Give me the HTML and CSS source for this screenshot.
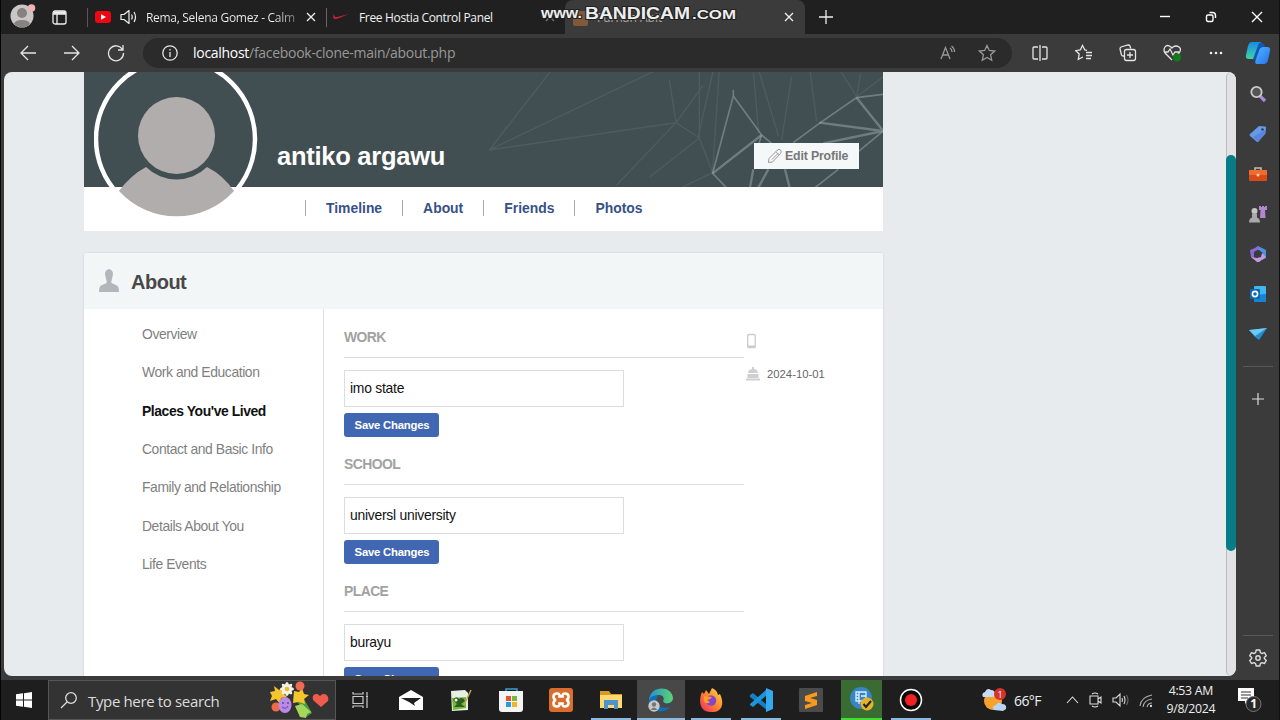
FILE: index.html
```html
<!DOCTYPE html>
<html lang="en">
  <head>
    <meta charset="UTF-8" />
    <meta name="viewport" content="width=device-width, initial-scale=1.0" />
    <title>Furhan Abit</title>
    <link rel="stylesheet" href="styles.css">
  </head>
  <body>
    <div class="screen">
      <!-- tab strip -->
      <div class="tabs">
        <div class="strip-left">
          <svg class="user-pic" width="26" height="26" viewBox="0 0 26 26">
            <circle cx="12" cy="13" r="11.5" fill="#c9c7c6" />
            <circle cx="12" cy="10" r="5" fill="#858280" />
            <path d="M4 21q1-4 8-4t8 4a11.5 11.5 0 0 1-16 0" fill="#858280" />
            <circle cx="21.5" cy="5" r="3.8" fill="#f2b3b3" />
          </svg>
          <svg width="15" height="15" viewBox="0 0 15 15" fill="none" stroke="#eee" stroke-width="1.3">
            <rect x="1" y="1" width="13" height="13" rx="2" />
            <path d="M1 4h13M5 4v10" /><path d="M1.500 2.600h12" stroke-width="2.500" />
          </svg>
        </div>
        <div class="tab first">
          <svg width="16" height="12" viewBox="0 0 16 12"><rect width="16" height="12" rx="3" fill="#f00612" /><path d="M6 3.200l5 2.800-5 2.800z" fill="#fff" /></svg>
          <svg class="sound" width="17" height="16" viewBox="0 0 17 16" fill="none" stroke="#eee" stroke-width="1.200">
            <path d="M1 5.500h3L9 1.500v13L4 10.500H1z" stroke-linejoin="round" /><path d="M11.500 5.500q1.500 2.500 0 5M14 3q3 5 0 10" />
          </svg>
          <span class="tab-title calm">Rema, Selena Gomez - Calm</span>
          <svg class="close" width="10" height="10" viewBox="0 0 10 10"><path d="M1 1l8 8M9 1l-8 8" /></svg>
        </div>
        <div class="tab second">
          <svg width="18" height="8" viewBox="0 0 18 8"><path d="M2 1C0 5 2 7 6 5.500L17 1 6 3.700C3 4.400 2 3.500 2 1z" fill="#c8203b" /></svg>
          <span class="tab-title hostia">Free Hostia Control Panel</span>
          <svg class="close dim" width="10" height="10" viewBox="0 0 10 10"><path d="M1 1l8 8M9 1l-8 8" /></svg>
        </div>
        <div class="tab active">
          <span class="favicon"></span>
          <span class="tab-title under">Furhan Abit</span>
          <svg class="close" width="10" height="10" viewBox="0 0 10 10"><path d="M1 1l8 8M9 1l-8 8" /></svg>
        </div>
        <svg class="new-tab" width="14" height="14" viewBox="0 0 14 14"><path d="M7 0v14M0 7h14" /></svg>
        <div class="window-buttons">
          <svg width="12" height="12" viewBox="0 0 12 12"><path d="M1 5.500h10" /></svg>
          <svg width="12" height="12" viewBox="0 0 12 12"><rect x="1.500" y="4" width="6.500" height="6.500" rx="1.500" /><path d="M4.500 1.500h3q3 0 3 3v2.500" /></svg>
          <svg width="12" height="12" viewBox="0 0 12 12"><path d="M1 1l10 10M11 1L1 11" /></svg>
        </div>
      </div>

      <!-- recorder watermark -->
      <svg class="watermark" width="204" height="24" viewBox="0 0 204 24">
        <text x="4" y="16" font-size="15" textLength="41" lengthAdjust="spacingAndGlyphs">www.</text>
        <text x="48" y="17" font-size="16" textLength="105" lengthAdjust="spacingAndGlyphs">BANDICAM</text>
        <text x="155" y="17" font-size="12.500" textLength="44" lengthAdjust="spacingAndGlyphs">.COM</text>
      </svg>

      <!-- address bar -->
      <div class="toolbar">
        <div class="nav-buttons">
          <svg width="18" height="18" viewBox="0 0 18 18"><path d="M17 9H2M9 2L2 9l7 7" /></svg>
          <svg width="18" height="18" viewBox="0 0 18 18"><path d="M1 9h15M9 2l7 7-7 7" /></svg>
          <svg width="18" height="18" viewBox="0 0 18 18"><path d="M15.500 5.500A7.500 7.500 0 1 0 16.500 9M16 1v5h-5" /></svg>
        </div>
        <div class="address">
          <svg width="16" height="16" viewBox="0 0 16 16"><circle cx="8" cy="8" r="7.200" /><path d="M8 7v5M8 4v1.500" /></svg>
          <span class="url"><b>localhost</b>/facebook-clone-main/about.php</span>
          <svg class="read" width="16" height="16" viewBox="0 0 16 16"><path d="M1 14L5.500 2.500 10 14M2.800 10h5.500M10 3q2 1.500 2 4M11.500 1q3 2 3 6" /></svg>
          <svg class="star" width="18" height="18" viewBox="0 0 18 18"><path d="M9 1.500l2.300 5 5.300.6-4 3.700 1.100 5.400L9 13.500l-4.700 2.700 1.100-5.400-4-3.700 5.300-.6z" /></svg>
        </div>
        <div class="tools">
          <svg width="18" height="18" viewBox="0 0 18 18"><path d="M7 3H3q-1 0-1 1v10q0 1 1 1h4M11 3h4q1 0 1 1v10q0 1-1 1h-4M9 1v16" /></svg>
          <svg width="18" height="18" viewBox="0 0 18 18"><path d="M12 6.300l-2.200-.3L7.500 1.500l-2.200 4.500-4.600.7 3.500 3.400-.9 5.300L8 13M11 8.500h6M11 11.500h6M11 14.500h5" /></svg>
          <svg width="18" height="18" viewBox="0 0 18 18"><path d="M5 12H4q-1 0-1.500-1L1 5q0-1.500 1-2l7-2q1.500 0 2 1l.7 2.500" /><rect x="5.500" y="5.500" width="11" height="11" rx="2" /><path d="M11 8v6M8 11h6" /></svg>
          <svg width="18" height="18" viewBox="0 0 18 18"><path d="M9 16L2 9Q0 6 2 3t6 0l1 1 1-1q3-2 6 0t0 6l-2 2M1 8h4l2-3 3 6 2-3h4" /><circle cx="14" cy="13.500" r="4" class="green" /></svg>
          <svg width="18" height="18" viewBox="0 0 18 18" class="dots"><circle cx="4" cy="9" r="1.300" /><circle cx="9" cy="9" r="1.300" /><circle cx="14" cy="9" r="1.300" /></svg>
        </div>
        <svg class="copilot" width="26" height="24" viewBox="0 0 26 24">
          <defs>
            <linearGradient id="cp1" x2="0" y2="1"><stop stop-color="#168ce9" /><stop offset="1" stop-color="#42d3a1" /></linearGradient>
            <linearGradient id="cp2" x2="1" y2="1"><stop stop-color="#52b5ff" /><stop offset="1" stop-color="#2471ed" /></linearGradient>
          </defs>
          <path d="M7 1h8q2 0 1 3l-3 11q-1 3-4 3H4q-4 0-3-4L3 5q1-4 4-4z" fill="url(#cp1)" />
          <path d="M11 18l3-9q1-3 4-3h4q4 0 3 4l-2 9q-1 4-4 4h-7q-3 0-1-5z" fill="url(#cp2)" />
          <path d="M14 2h3q2 0 3 4h-2q-3 0-4 4l-3 8q-1 3-3 0z" fill="#1456b5" />
        </svg>
      </div>

      <div class="content">
        <div class="page">
          <div class="profile">
            <div class="cover">
              <svg class="web" width="799" height="115" viewBox="0 0 799 115">
                <g transform="translate(396 -2) scale(.3333)" fill="none" stroke="#a5b7b9">
                  <g stroke-width="4" opacity=".13">
                    <path d="M28 240L210 6M28 240L530 0M28 240l560-82-20-130M588 158l80-110M588 158l70 46V0M588 158L410 345M658 204L510 320M658 204l40 104L610 350M700 0l-45 200M718 0l-20 300M820 0l16 190M836 0l60 200M935 20l-30 190M990 0l20 155M1080 0l50 80 12-70M1130 80L1210 20" />
                  </g>
                  <path d="M760 60v18l-62 232 40 42M760 78l85 117 30 25M940 218l78-58 112-77 80-10M1210 183l-75 62M1075 298l-70 55M845 195l-8 25" stroke-width="5" opacity=".45" />
                  <path d="M698 310L845 195M1018 158l192 25-80-100M1030 220l180-37M820 298l-10 55M865 298l-30 55M915 298l14 55" stroke-width="7" opacity=".45" />
                </g>
              </svg>
              <h1>antiko argawu</h1>
              <a class="edit-profile">
                <svg width="16" height="16" viewBox="0 0 16 16"><path d="M1.500 14.500l.5-4L10.500 2q1.500-1.500 3 0t0 3.500L5.500 14zM9 3.800l3 3M11 5.500L5 11.500" /></svg>
                <span>Edit Profile</span>
              </a>
            </div>
            <div class="profile-nav">
              <a>Timeline</a>
              <a>About</a>
              <a>Friends</a>
              <a>Photos</a>
            </div>
            <svg class="avatar" width="164" height="164" viewBox="0 0 164 164">
              <circle cx="81.500" cy="83" r="79.500" fill="none" stroke="#fff" stroke-width="4.500" />
              <path d="M25 135Q37 119 52 111A43.500 43.500 0 0 0 113 111Q129 119 140 135A78 78 0 0 1 25 135z" fill="#b1adac" />
              <circle cx="82.500" cy="79.500" r="38.500" fill="#b1adac" />
            </svg>
          </div>

          <div class="about">
            <div class="about-head">
              <svg width="22" height="24" viewBox="0 0 22 24"><path d="M7 5q0-4 4-5 4 1 4 5l-1 5q-1 2-.5 4l5.500 2.500q2 1 2 6.500H1q0-5.500 2-6.500L8.500 14q.5-2-.5-4z" fill="#b4b7b9" /></svg>
              <h2>About</h2>
            </div>
            <div class="about-body">
              <ul class="menu">
                <li>Overview</li>
                <li>Work and Education</li>
                <li class="selected">Places You've Lived</li>
                <li>Contact and Basic Info</li>
                <li>Family and Relationship</li>
                <li>Details About You</li>
                <li>Life Events</li>
              </ul>
              <div class="fields">
                <div class="field">
                  <h3>WORK</h3>
                  <input type="text" value="imo state">
                  <button>Save Changes</button>
                </div>
                <div class="field">
                  <h3>SCHOOL</h3>
                  <input type="text" value="universl university">
                  <button>Save Changes</button>
                </div>
                <div class="field">
                  <h3>PLACE</h3>
                  <input type="text" value="burayu">
                  <button>Save Changes</button>
                </div>
              </div>
              <div class="info">
                <svg width="15" height="16" viewBox="0 0 15 16"><rect x="1.700" y="1.500" width="7.500" height="13" rx="1" fill="none" stroke="#ccc" stroke-width="1.300" /><path d="M1.500 12.500h8v2h-8z" fill="#ccc" /></svg>
                <div class="birthday">
                  <svg width="15" height="16" viewBox="0 0 15 16" fill="#cfcfcf"><path d="M6 1h2v3H6zM3 4q4-2 8 0l1 3H2zM1.500 8h11v4h-11zM0 12.500h14v2H0z" /></svg>
                  <span>2024-10-01</span>
                </div>
              </div>
            </div>
          </div>
          <div class="scrollbar"><div class="thumb"></div></div>
        </div>

        <div class="sidebar">
          <div class="side-icon"><svg width="18" height="18" viewBox="0 0 18 18"><path d="M11 11l5 5" stroke="#a78bd8" stroke-width="3.200" /><circle cx="7.500" cy="7" r="5.200" fill="#555" stroke="#ccc" stroke-width="1.800" /></svg></div>
          <div class="side-icon"><svg width="18" height="18" viewBox="0 0 18 18"><path d="M10 1l6 .5q1 0 1 1l-.5 6-7 8q-1 1-2 0L1 11q-1-1 0-2z" fill="#669ae8" /><path d="M4 12l5 5 7-9V5z" fill="#5b84de" /><circle cx="13.500" cy="4.500" r="1.300" fill="#24406e" /></svg></div>
          <div class="side-icon"><svg width="18" height="18" viewBox="0 0 18 18"><path d="M6 5V3h6v2" fill="none" stroke="#cfb6ac" stroke-width="1.600" /><rect x="0" y="5" width="18" height="11" rx="1" fill="#d94a19" /><path d="M0 5h18v5H0z" fill="#f16a30" /><circle cx="9" cy="10" r="1.500" fill="#f5d2b8" /></svg></div>
          <div class="side-icon"><svg width="18" height="18" viewBox="0 0 18 18"><path d="M10 1h2v1h1V1h2v1h1V1h2v4h-2l.5 8H11l.5-8H10z" fill="#b287d2" /><circle cx="5.500" cy="6" r="3" fill="#c5c3c5" /><path d="M3 8.500h5v4q3 1 3 5H0q0-4 3-5z" fill="#aaa8aa" /></svg></div>
          <div class="side-icon"><svg width="18" height="18" viewBox="0 0 18 18"><path d="M9 1l8 4v8l-4 2 .5-7.500L6 3.500z" fill="#4e91dc" /><path d="M6 3l3-2 1 3-5 3v7l-3-2-1-7z" fill="#8b69d4" /><path d="M2 12l6 1 5-5 4 4-7 5H8z" fill="#c199e5" /><path d="M6 7l4-2 3 3-1 4-4 1-2-2z" fill="#3b3b3b" /></svg></div>
          <div class="side-icon"><svg width="18" height="18" viewBox="0 0 18 18"><rect x="5" y="1" width="12" height="13" rx="1" fill="#42b6ef" /><path d="M5 10l12-1v8H5z" fill="#1685d4" /><rect x="1" y="4" width="10" height="10" rx="1" fill="#0b68b5" /><circle cx="6" cy="9" r="2.600" fill="none" stroke="#fff" stroke-width="1.600" /></svg></div>
          <div class="side-icon"><svg width="18" height="18" viewBox="0 0 18 18"><path d="M0 5l18-2-8 12-4-3z" fill="#248dd5" /><path d="M0 5l18-2-12 8z" fill="#71c9f2" /></svg></div>
          <div class="side-add"><svg width="12" height="12" viewBox="0 0 12 12"><path d="M6 0v12M0 6h12" stroke="#ddd" stroke-width="1.200" /></svg></div>
          <div class="side-settings"><svg width="20" height="20" viewBox="0 0 20 20" fill="none" stroke="#ddd" stroke-width="1.400" stroke-linejoin="round"><path d="M8.200 2h3.600l.6 2.600 1.500.9 2.600-.8 1.800 3.100-2 1.800v1l2 1.800-1.800 3.100-2.600-.8-1.500.9-.6 2.400H8.200l-.6-2.400-1.500-.9-2.600.8-1.800-3.100 2-1.800v-1l-2-1.800 1.800-3.100 2.600.8 1.500-.9z" /><circle cx="10" cy="10" r="2.200" /></svg></div>
        </div>
      </div>

      <!-- taskbar -->
      <div class="taskbar">
        <div class="start"><svg width="16" height="16" viewBox="0 0 16 16" fill="#fff"><path d="M0 2.300l7-1v6.300H0zM8 1.200L16 0v7.600H8zM0 8.500h7v6.200l-7-1zM8 8.500h8V16l-8-1.200z" /></svg></div>
        <div class="search">
          <svg width="18" height="18" viewBox="0 0 18 18" fill="none" stroke="#ddd" stroke-width="1.300"><circle cx="11" cy="7" r="5.300" /><path d="M7 11l-6 6" /></svg>
          <span>Type here to search</span>
          <svg class="flowers" width="62" height="38" viewBox="0 0 62 38">
            <path d="M28 18l10 18 6-4-8-14z" fill="#4c9c3c" /><path d="M27 25l7-2 9 8-4 2-1 4-6-1z" fill="#a6d65c" />
            <g fill="#f6c42d"><path d="M2 11l5-1-1-5 5 4 4-3v6l4 4-6 1-1 6-4-5-6 2 2-5z" /><path d="M26 10l5 1 3-4 2 6 5 1-5 4 1 5-6-2-6 1z" /></g>
            <circle cx="32" cy="5" r="4.500" fill="#ef6b55" /><circle cx="8" cy="26" r="4.500" fill="#ef6b45" />
            <g fill="#f4f1ea"><ellipse cx="19" cy="8" rx="2.500" ry="7" /><ellipse cx="19" cy="8" rx="7" ry="2.500" /><ellipse cx="19" cy="8" rx="2.500" ry="7" transform="rotate(45 19 8)" /><ellipse cx="19" cy="8" rx="2.500" ry="7" transform="rotate(-45 19 8)" /></g><circle cx="19" cy="8" r="2.300" fill="#f1b822" />
            <ellipse cx="17" cy="24" rx="6.500" ry="8" fill="#b98be7" /><circle cx="15" cy="22" r="1" fill="#664398" /><circle cx="20" cy="22" r="1" fill="#664398" /><path d="M14 26q4 3 6-1" fill="none" stroke="#664398" />
            <path d="M53 26l-7-6c-4-5 2-10 6-5 4-5 10 0 8 5z" fill="#f05c4b" />
          </svg>
        </div>
        <div class="task view"><svg width="18" height="18" viewBox="0 0 18 18" fill="none" stroke="#ccc" stroke-width="1.200"><path d="M2 1v2h10V1M2 17v-2h10v2M2 5.500h10v7H2zM16 1v3M16 7v10" /><path d="M15 5.500h2" stroke-width="2" /></svg></div>
        <div class="apps">
          <div class="task"><svg width="26" height="22" viewBox="0 0 26 22"><path d="M1 8l12-7 12 7v13H1z" fill="#fff" /><path d="M3 9h20l-7 5 1 3-6-4z" fill="#1f1f1f" /></svg></div>
          <div class="task"><svg width="24" height="24" viewBox="0 0 24 24"><path d="M2 3l14-1 3 3v17L3 23z" fill="#e8eee5" /><path d="M3 10l14-1v11L4 22z" fill="#70bd32" /><path d="M4 12q3-5 6-1 4-3 6 2l-4 3 4 3H5l3-3z" fill="#315c27" /><circle cx="7" cy="12" r="1.500" fill="#fff" /><path d="M22 2l-7 15" stroke="#c5a65a" stroke-width="1.500" /></svg></div>
          <div class="task"><svg width="24" height="24" viewBox="0 0 24 24"><path d="M7 5V1h11v4" fill="none" stroke="#3aa0d4" stroke-width="1.500" /><path d="M0 3h24v18q0 3-3 3H3q-3 0-3-3z" fill="#f4f4f4" /><path d="M7 8h5v5H7z" fill="#e75232" /><path d="M13 8h5v5h-5z" fill="#79b83a" /><path d="M7 14h5v5H7z" fill="#279edb" /><path d="M13 14h5v5h-5z" fill="#f3b51b" /></svg></div>
          <div class="task"><svg width="24" height="24" viewBox="0 0 24 24"><rect width="24" height="24" rx="3" fill="#d96d2d" /><path d="M8 5.500Q4.500 5.500 4.500 8.500T7 12q-2.500.5-2.500 3.500t3.500 3q3 0 2.500-3h3q-.5 3 2.500 3t3.500-3T17 12q2.500-.5 2.500-3.500t-3.500-3q-3 0-2.500 3h-3q.5-3-2.500-3z" fill="none" stroke="#fff" stroke-width="2.600" /></svg></div>
          <div class="task open"><svg width="22" height="20" viewBox="0 0 22 20"><path d="M0 1h9l2 3h11v14H0z" fill="#d89b25" /><path d="M0 5h22v13H0z" fill="#ffda71" /><path d="M4 10h14v9h-4v-4H8v4H4z" fill="#4d94ca" /></svg></div>
          <div class="task open current"><svg width="26" height="24" viewBox="0 0 26 24">
            <defs><linearGradient id="edge" x2="1"><stop stop-color="#258ed8" /><stop offset="1" stop-color="#59d66e" /></linearGradient></defs>
            <path d="M1 12C2-3 24-3 25 10c0 6-9 7-10 3 2-3 0-6-4-6-5 0-9 4-10 9z" fill="url(#edge)" /><path d="M10 8c-5 7 1 14 12 11-4 6-17 7-21-4-1-5 5-9 9-7z" fill="#116eb8" />
            <circle cx="6" cy="18" r="5.700" fill="#c6c8c9" /><circle cx="6" cy="16.500" r="2.200" fill="#777" /><path d="M2.500 22q3.500-5 7 0z" fill="#777" /></svg></div>
          <div class="task open"><svg width="24" height="24" viewBox="0 0 24 24">
            <defs><linearGradient id="fox" x1="1" x2="0" y2="1"><stop stop-color="#ffe044" /><stop offset=".5" stop-color="#ff852d" /><stop offset="1" stop-color="#ed256b" /></linearGradient></defs>
            <path d="M3 4l2 2 2-4 3 4 3-6q5 2 6 7l2-1c7 15-4 19-9 18C1 24-1 14 3 4z" fill="url(#fox)" /><circle cx="12" cy="12.500" r="5.200" fill="#8446ca" /><path d="M5 8l8 1q-2 3-5 3l3 2q-4 3-6-1z" fill="#ff9d28" /></svg></div>
          <div class="task open"><svg width="24" height="24" viewBox="0 0 24 24"><path d="M1 7l3-2 14 12v5L1 9z" fill="#1381ca" /><path d="M1 16l17-15v6L4 19l-3-2z" fill="#1d95db" /><path d="M17 0l7 3v18l-7 3z" fill="#35a9ee" /></svg></div>
          <div class="task"><svg width="24" height="24" viewBox="0 0 24 24"><rect width="24" height="24" rx="1" fill="#4b4b4b" /><path d="M18 4v4l-7 2 7 2v5L6 21v-4l7-2-7-2V8z" fill="#fb9a1c" /></svg></div>
          <div class="task green-task"><svg width="24" height="24" viewBox="0 0 24 24"><circle cx="11" cy="11" r="11" fill="#3685c4" /><path d="M6 5h10v9H6zM9 5v12M6 8h3M6 11h3M11 9h5" fill="none" stroke="#dcefff" stroke-width="1.300" /><circle cx="17" cy="17" r="6.500" fill="#e3b32a" /><path d="M13.500 17l2.500 3 5-6" fill="none" stroke="#222" stroke-width="2" /></svg></div>
          <div class="task open"><svg width="24" height="24" viewBox="0 0 24 24"><circle cx="12" cy="12" r="10.500" fill="#090909" stroke="#fff" stroke-width="1.500" /><circle cx="12" cy="12" r="6" fill="#f02023" /></svg></div>
        </div>
        <div class="weather">
          <svg width="26" height="24" viewBox="0 0 26 24"><circle cx="11" cy="13" r="9" fill="#f7a12e" /><path d="M1 9q-2-4 2-5 2-5 6-2 4 0 4 4 0 3-3 3z" fill="#c8dcf7" /><path d="M12 22q-3-4 2-5 2-4 6-1 5 0 4 5l-3 2z" fill="#b9d5f6" /><circle cx="18" cy="6" r="6" fill="#d5332b" /><text x="15.500" y="9.500" font-size="9" fill="#fff" font-family="Open Sans, sans-serif">1</text></svg>
          <span>66°F</span>
        </div>
        <div class="tray">
          <svg width="13" height="16" viewBox="0 0 13 16"><path d="M1 11l5.500-6 5.500 6" /></svg>
          <svg width="13" height="16" viewBox="0 0 13 16"><path d="M1 4h8v8H1zM9 7l3-2v6L9 9M3 2q3-2 6 0M3 14q3 2 6 0" /></svg>
          <svg width="17" height="16" viewBox="0 0 17 16"><path d="M1 6h3l4-4v12L4 10H1zM10 6q1 2 0 4M12 4q2 4 0 8" /><path d="M14.500 3q3 5 0 10" opacity=".4" /></svg>
          <svg width="14" height="16" viewBox="0 0 14 16"><path d="M1 14Q2 5 13 3M4 15q1-7 9-8M8 15q1-4 5-4" opacity=".75" /><circle cx="12" cy="14" r=".6" /></svg>
        </div>
        <div class="clock"><span>4:53 AM</span><span>9/8/2024</span></div>
        <svg class="notice" width="26" height="26" viewBox="0 0 26 26"><path d="M1 1h16v13h-6l-3 3v-3H1z" fill="#fff" /><path d="M4 5h10M4 8h10M4 11h7" stroke="#333" /><circle cx="16.500" cy="17" r="7.500" fill="#292929" stroke="#777" /><text x="13.200" y="21.200" font-size="12" font-weight="bold" fill="#fff" font-family="Open Sans, sans-serif">1</text></svg>
      </div>
    </div>
  </body>
</html>
```

FILE: styles.css
```css
* {
  box-sizing: border-box;
}
body {
  margin: 0;
  font-family: "Liberation Sans", Arial, sans-serif;
  overflow: hidden;
}
svg {
  display: block;
  flex-shrink: 0;
}
.screen {
  position: relative;
  width: 1280px;
  height: 720px;
  display: flex;
  flex-direction: column;
  background: #3b3b3b;
  border-left: 1px solid #050505;
  border-right: 1px solid #111;
  overflow: hidden;
}

/* tabs */
.tabs {
  height: 34px;
  display: flex;
  align-items: center;
  background: #202020;
  font-family: "Open Sans", sans-serif;
  color: #f2f2f2;
}
.strip-left {
  width: 86px;
  padding-left: 9px;
  display: flex;
  align-items: center;
  gap: 16px;
}
.user-pic {
  margin-top: -2px;
}
.tab {
  height: 34px;
  display: flex;
  align-items: center;
  white-space: nowrap;
}
.tab.first {
  width: 239px;
  padding-left: 8px;
  background: linear-gradient(#645054, #645054) 0 50% / 1px 19px no-repeat;
}
.tab.second {
  width: 239px;
  padding-left: 6px;
  background: linear-gradient(#666, #666) 0 50% / 1px 19px no-repeat;
}
.tab.active {
  width: 240px;
  padding-left: 8px;
  background: #3b3b3b;
  border-radius: 8px 8px 0 0;
}
.tab-title {
  font-size: 12px;
}
.sound {
  margin-left: 9px;
}
.calm {
  width: 151px;
  margin-left: 9px;
  letter-spacing: -0.3px;
  overflow: hidden;
  color: transparent;
  background: linear-gradient(90deg, #f2f2f2 85%, #666);
  background-clip: text;
  -webkit-background-clip: text;
}
.hostia {
  width: 179px;
  margin-left: 9px;
  letter-spacing: -0.34px;
}
.close {
  fill: none;
  stroke: #eee;
  stroke-width: 1.3;
}
.first .close {
  margin-left: 9px;
}
.close.dim {
  margin-left: 7px;
  opacity: 0.4;
}
.favicon {
  width: 15px;
  height: 15px;
  margin-top: 3px;
  border-radius: 2px;
  background: #80593b;
}
.under {
  width: 187px;
  margin-left: 9px;
  color: #aaa;
}
.new-tab {
  margin-left: 14px;
  fill: none;
  stroke: #eee;
  stroke-width: 1.3;
}
.window-buttons {
  margin-left: auto;
  margin-right: 16px;
  display: flex;
  gap: 34px;
  fill: none;
  stroke: #fff;
  stroke-width: 1.4;
}
.watermark {
  position: absolute;
  left: 536px;
  top: 2px;
  font-family: "Liberation Sans", Arial, sans-serif;
  font-weight: bold;
  fill: #eee;
  stroke: #222;
  stroke-width: 2px;
  paint-order: stroke;
}

/* address bar */
.toolbar {
  height: 38px;
  display: flex;
  align-items: center;
  fill: none;
  stroke: #e5e5e5;
  stroke-width: 1.3;
}
.nav-buttons {
  width: 142px;
  padding-left: 18px;
  display: flex;
  gap: 26px;
}
.address {
  width: 869px;
  height: 30px;
  padding: 0 16px 0 19px;
  display: flex;
  align-items: center;
  border-radius: 15px;
  background: #2b2b2b;
}
.url {
  margin: -1px auto 0 15px;
  font: 14px "Open Sans", sans-serif;
  letter-spacing: -0.29px;
  color: #999;
}
.url b {
  font-weight: 400;
  color: #fff;
}
.read,
.star {
  stroke: #999;
}
.star {
  margin-left: 22px;
}
.tools {
  margin-left: 19px;
  display: flex;
  gap: 26px;
}
.green {
  fill: #127b1c;
  stroke: none;
}
.dots {
  fill: #eee;
  stroke: none;
}
.copilot {
  margin-left: 20px;
  stroke: none;
}

/* page */
.content {
  height: 604px;
  display: flex;
}
.page {
  position: relative;
  width: 1232px;
  height: 604px;
  margin-left: 3px;
  padding-left: 80px;
  background: #e7ebee;
  border-radius: 8px;
  overflow: hidden;
}
.profile {
  position: relative;
  width: 799px;
  height: 159px;
  background: #fff;
}
.cover {
  position: relative;
  height: 115px;
  display: flex;
  background: #424f52;
}
.web,
.avatar {
  position: absolute;
  top: 0;
  left: 0;
}
.avatar {
  top: -16px;
  left: 10px;
}
h1 {
  position: relative;
  margin: 69px 0 0 193px;
  font-size: 25.5px;
  line-height: 30px;
  letter-spacing: -0.26px;
  color: #fff;
}
.edit-profile {
  position: relative;
  width: 105px;
  height: 26px;
  margin: 71px 24px 0 auto;
  padding-left: 13px;
  display: flex;
  align-items: center;
  gap: 2px;
  background: #f4f8f9;
  color: #777;
  font-size: 12.3px;
  font-weight: bold;
  letter-spacing: -0.15px;
  white-space: nowrap;
}
.edit-profile svg {
  fill: none;
  stroke: #999;
}
.profile-nav {
  height: 44px;
  padding: 13px 0 0 221px;
  display: flex;
}
.profile-nav a {
  height: 16px;
  padding: 0 20px;
  border-left: 1px solid #aaa;
  font-size: 13.9px;
  line-height: 17px;
  font-weight: bold;
  color: #365187;
}
.about {
  width: 799px;
  margin-top: 22px;
  background: #fff;
  border-radius: 3px 3px 0 0;
  box-shadow: 0 0 2px #bbc3c8;
}
.about-head {
  height: 56px;
  padding-left: 14px;
  display: flex;
  align-items: center;
  gap: 11px;
  background: #f3f6f7;
  border-radius: 3px 3px 0 0;
}
h2 {
  margin: 3px 0 0;
  font-size: 20px;
  letter-spacing: -0.5px;
  color: #484848;
}
.about-body {
  height: 400px;
  display: flex;
}
.menu {
  width: 240px;
  margin: 0;
  padding: 6px 0 0 58px;
  list-style: none;
  border-right: 1px solid #dfe1e3;
}
.menu li {
  height: 38.35px;
  font-size: 13.9px;
  line-height: 38px;
  letter-spacing: -0.41px;
  color: #7f7f7f;
}
.menu .selected {
  font-weight: bold;
  color: #111;
}
.fields {
  width: 420px;
  padding: 18px 0 0 20px;
}
.field {
  height: 127px;
}
h3 {
  height: 31px;
  margin: 0 0 12px;
  border-bottom: 1px solid #dedede;
  font-size: 13.9px;
  line-height: 21px;
  letter-spacing: -0.55px;
  color: #a2a2a2;
}
.field input {
  display: block;
  width: 280px;
  height: 37px;
  padding: 0 5px 1px;
  border: 1px solid #ddd;
  font: 13.9px "Liberation Sans", Arial, sans-serif;
  letter-spacing: -0.25px;
  color: #111;
}
.field button {
  display: block;
  width: 95px;
  height: 24px;
  margin-top: 6px;
  padding: 0 0 1px 1px;
  border: 0;
  border-radius: 3px;
  background: #4267b2;
  color: #fff;
  font: bold 11.3px "Liberation Sans", Arial, sans-serif;
  letter-spacing: -0.2px;
}
.info {
  padding: 24px 0 0 2px;
}
.birthday {
  margin-top: 17px;
  display: flex;
  align-items: center;
  gap: 6px;
  color: #666;
  font-size: 11.3px;
}
.scrollbar {
  position: absolute;
  top: 0;
  right: 0;
  width: 10px;
  height: 604px;
  padding-top: 83px;
  background: #e0e2e3;
  border-left: 1px solid #b9bcbe;
  border-radius: 5px;
}
.thumb {
  width: 10px;
  height: 396px;
  margin-left: -1px;
  border-radius: 5px;
  background: #087c86;
}

/* edge sidebar */
.sidebar {
  width: 43px;
  padding-top: 2px;
  display: flex;
  flex-direction: column;
  align-items: center;
}
.side-icon {
  height: 40px;
  display: flex;
  align-items: center;
}
.side-add {
  width: 30px;
  height: 64px;
  margin-top: 12px;
  display: flex;
  justify-content: center;
  align-items: center;
  border-top: 1px solid #5a5a5a;
}
.side-settings {
  width: 30px;
  margin-top: auto;
  padding: 12px 0 8px 5px;
  border-top: 1px solid #5a5a5a;
}

/* windows taskbar */
.taskbar {
  height: 40px;
  margin-top: 4px;
  display: flex;
  align-items: center;
  background: #1e1e1e;
  font-family: "Open Sans", sans-serif;
  color: #eee;
}
.start {
  width: 47px;
  padding-left: 15px;
}
.search {
  width: 288px;
  height: 40px;
  padding-left: 11px;
  display: flex;
  align-items: center;
  gap: 10px;
  background: #333;
  border: 1px solid #565656;
  font-size: 15px;
  letter-spacing: -0.35px;
  color: #ddd;
  white-space: nowrap;
}
.search span {
  width: 170px;
  padding-top: 1px;
}
.task {
  position: relative;
  width: 50px;
  height: 40px;
  display: flex;
  justify-content: center;
  align-items: center;
}
.apps {
  display: flex;
}
.view {
  padding-right: 3px;
}
.open::after {
  content: "";
  position: absolute;
  left: 5px;
  right: 5px;
  bottom: 0;
  height: 2px;
  background: #8bb9df;
}
.current {
  width: 48px;
  margin: 0 1px;
  background: #484848;
}
.current::after {
  left: 0;
  right: 0;
}
.green-task {
  width: 41px;
  margin: 0 4px 0 5px;
  background: #3a6b33;
  border-bottom: 2px solid #43dc32;
}
.weather {
  margin-left: 46px;
  display: flex;
  align-items: center;
  gap: 6px;
  font-size: 14px;
  letter-spacing: -0.6px;
}
.tray {
  margin-left: 25px;
  display: flex;
  gap: 10px;
  fill: none;
  stroke: #ddd;
  stroke-width: 1.1;
}
.clock {
  width: 60px;
  margin-left: 8px;
  display: flex;
  flex-direction: column;
  align-items: center;
  font-size: 12.3px;
  line-height: 18px;
  letter-spacing: -0.3px;
}
.notice {
  margin-left: 16px;
}
```
